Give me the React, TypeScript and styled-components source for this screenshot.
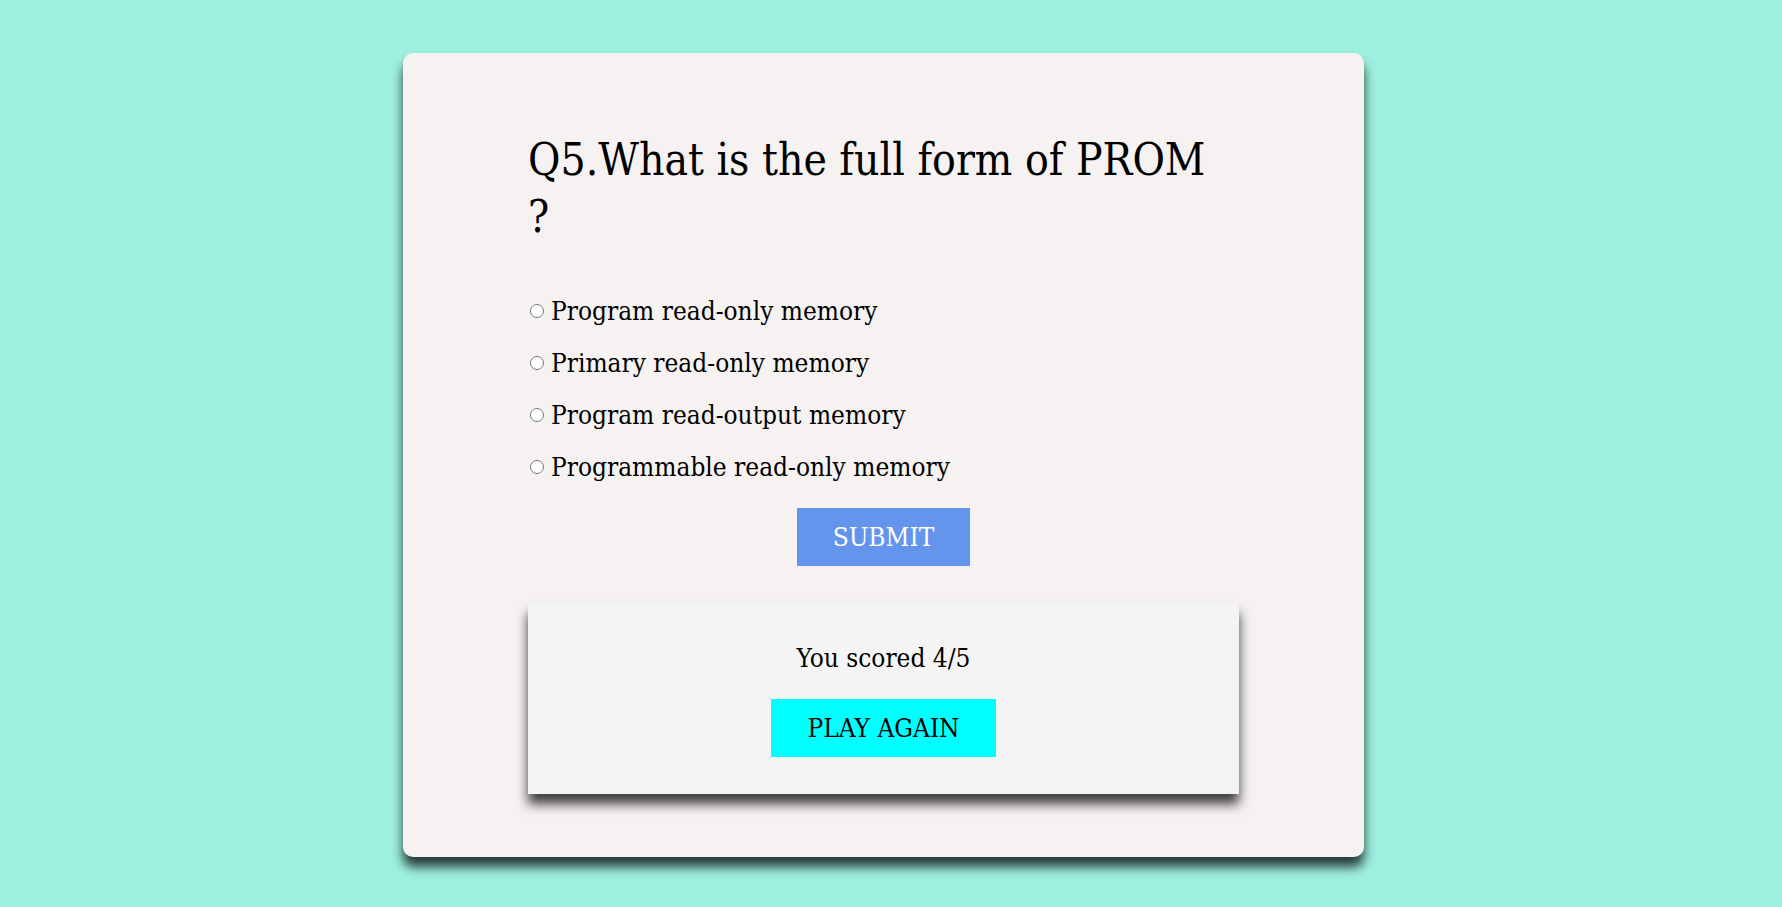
import React, { useState } from 'react';
import styled, { createGlobalStyle } from 'styled-components';

const GlobalStyle = createGlobalStyle`
  html, body {
    margin: 0;
    overflow: hidden;
  }
  body {
    background: #9defdf;
    font-family: "DejaVu Serif Condensed", "DejaVu Serif", serif;
    color: #000;
  }
`;

const Page = styled.main`
  display: flex;
  justify-content: center;
  align-items: flex-start;
  min-height: 100vh;
  box-sizing: border-box;
  padding: 53px 15px 0 0;
`;

const Card = styled.section`
  width: 961px;
  box-sizing: border-box;
  padding: 78px 125px 63px;
  background: #f6f2f1;
  border-radius: 10px;
  box-shadow: 0 10px 11px rgba(0, 0, 0, 0.75);
`;

const Question = styled.h1`
  margin: 0;
  padding-right: 24px;
  font-size: 44px;
  font-weight: 400;
  line-height: 57px;
`;

const Options = styled.div`
  display: flex;
  flex-direction: column;
  margin-top: 40px;
`;

const Option = styled.label`
  display: flex;
  align-items: center;
  gap: 7px;
  height: 52px;
  font-size: 26px;
  line-height: 52px;
  cursor: pointer;
`;

const Radio = styled.input`
  width: 14px;
  height: 14px;
  margin: 0 0 0 2px;
`;

const Actions = styled.div`
  display: flex;
  justify-content: center;
  margin-top: 15px;
`;

const Button = styled.button<{ $variant: 'submit' | 'play' }>`
  height: 58px;
  padding: 0 36px;
  border: none;
  border-radius: 0;
  font-family: inherit;
  font-size: 26px;
  text-transform: uppercase;
  cursor: pointer;
  background: ${(p) => (p.$variant === 'submit' ? '#6495ed' : '#00ffff')};
  color: ${(p) => (p.$variant === 'submit' ? '#fff' : '#000')};
`;

const ScoreBox = styled.div`
  display: flex;
  flex-direction: column;
  align-items: center;
  gap: 26px;
  margin-top: 37px;
  padding: 40px 0 37px;
  background: #f4f4f4;
  box-shadow: 0 10px 11px rgba(0, 0, 0, 0.75);
`;

const ScoreText = styled.p`
  margin: 0;
  font-size: 26px;
`;

const options = [
  'Program read-only memory',
  'Primary read-only memory',
  'Program read-output memory',
  'Programmable read-only memory',
];

export default function App() {
  const [choice, setChoice] = useState<string | null>(null);

  return (
    <>
      <GlobalStyle />
      <Page>
        <Card>
          <Question>Q5.What is the full form of PROM ?</Question>
          <Options>
            {options.map((option) => (
              <Option key={option}>
                <Radio
                  type="radio"
                  name="answer"
                  checked={choice === option}
                  onChange={() => setChoice(option)}
                />
                {option}
              </Option>
            ))}
          </Options>
          <Actions>
            <Button $variant="submit">Submit</Button>
          </Actions>
          <ScoreBox>
            <ScoreText>You scored 4/5</ScoreText>
            <Button $variant="play">Play again</Button>
          </ScoreBox>
        </Card>
      </Page>
    </>
  );
}
